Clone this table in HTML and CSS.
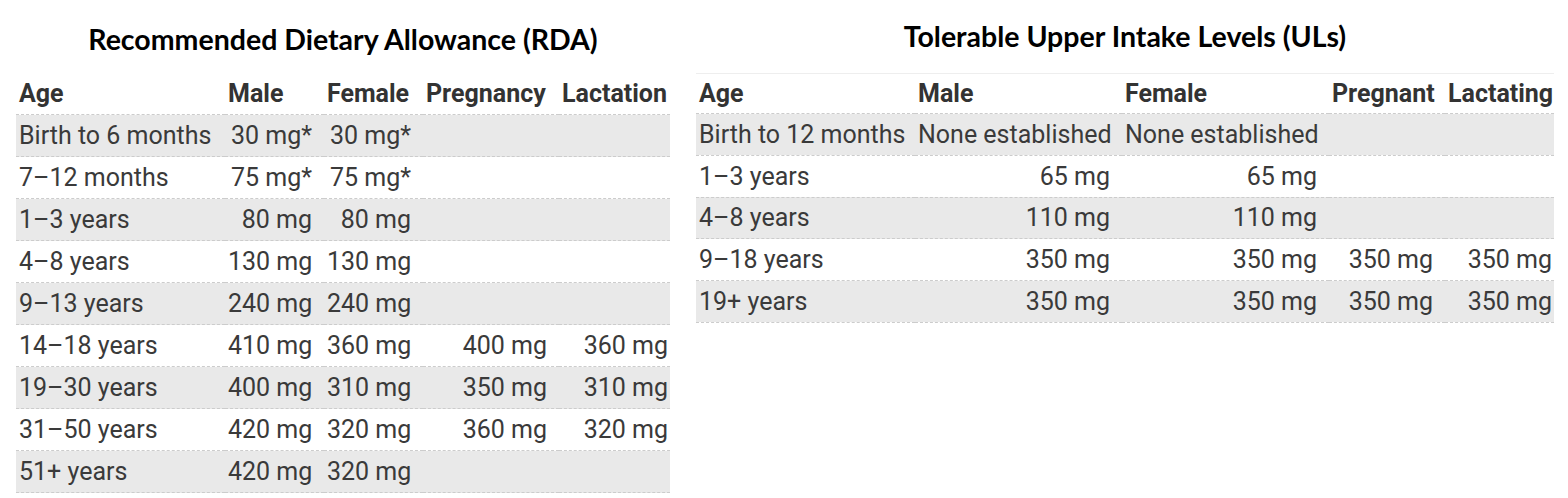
FILE: index.html
```html
<!DOCTYPE html>
<html>
<head>
<meta charset="utf-8">
<link rel="stylesheet" href="styles.css">
</head>
<body>
<div class="page">
  <section class="panel panel-rda">
    <h2 class="title title-rda">Recommended Dietary Allowance (RDA)</h2>
    <table class="grid grid-rda">
      <colgroup>
        <col class="c-age-l"><col class="c-m-l"><col class="c-f-l"><col class="c-p-l"><col class="c-lac-l">
      </colgroup>
      <thead>
        <tr><th>Age</th><th>Male</th><th>Female</th><th>Pregnancy</th><th>Lactation</th></tr>
      </thead>
      <tbody>
        <tr class="shade"><td>Birth to 6 months</td><td class="num">30 mg*</td><td class="num">30 mg*</td><td></td><td></td></tr>
        <tr><td>7–12 months</td><td class="num">75 mg*</td><td class="num">75 mg*</td><td></td><td></td></tr>
        <tr class="shade"><td>1–3 years</td><td class="num">80 mg</td><td class="num">80 mg</td><td></td><td></td></tr>
        <tr><td>4–8 years</td><td class="num">130 mg</td><td class="num">130 mg</td><td></td><td></td></tr>
        <tr class="shade"><td>9–13 years</td><td class="num">240 mg</td><td class="num">240 mg</td><td></td><td></td></tr>
        <tr><td>14–18 years</td><td class="num">410 mg</td><td class="num">360 mg</td><td class="num">400 mg</td><td class="num">360 mg</td></tr>
        <tr class="shade"><td>19–30 years</td><td class="num">400 mg</td><td class="num">310 mg</td><td class="num">350 mg</td><td class="num">310 mg</td></tr>
        <tr><td>31–50 years</td><td class="num">420 mg</td><td class="num">320 mg</td><td class="num">360 mg</td><td class="num">320 mg</td></tr>
        <tr class="shade"><td>51+ years</td><td class="num">420 mg</td><td class="num">320 mg</td><td></td><td></td></tr>
      </tbody>
    </table>
  </section>
  <section class="panel panel-ul">
    <h2 class="title title-ul">Tolerable Upper Intake Levels (ULs)</h2>
    <table class="grid grid-ul">
      <colgroup>
        <col class="c-age-r"><col class="c-m-r"><col class="c-f-r"><col class="c-p-r"><col class="c-lac-r">
      </colgroup>
      <thead>
        <tr><th>Age</th><th>Male</th><th>Female</th><th>Pregnant</th><th>Lactating</th></tr>
      </thead>
      <tbody>
        <tr class="shade"><td>Birth to 12 months</td><td>None established</td><td>None established</td><td></td><td></td></tr>
        <tr><td>1–3 years</td><td class="num">65 mg</td><td class="num">65 mg</td><td></td><td></td></tr>
        <tr class="shade"><td>4–8 years</td><td class="num">110 mg</td><td class="num">110 mg</td><td></td><td></td></tr>
        <tr><td>9–18 years</td><td class="num">350 mg</td><td class="num">350 mg</td><td class="num">350 mg</td><td class="num">350 mg</td></tr>
        <tr class="shade"><td>19+ years</td><td class="num">350 mg</td><td class="num">350 mg</td><td class="num">350 mg</td><td class="num">350 mg</td></tr>
      </tbody>
    </table>
  </section>
</div>
</body>
</html>
```

FILE: styles.css
```css
html, body {
  margin: 0;
  padding: 0;
  background: #ffffff;
}

.page {
  display: flex;
  align-items: flex-start;
  gap: 26px;
  padding-left: 16px;
}

.panel {
  display: flex;
  flex-direction: column;
}

.panel-rda { width: 654px; }
.panel-ul { width: 858px; }

.title {
  margin: 0;
  height: 73px;
  box-sizing: border-box;
  font-family: "Lato", "Liberation Sans", sans-serif;
  font-weight: 700;
  font-size: 28.5px;
  line-height: 32px;
  color: #000;
  text-align: center;
}

.title-rda { padding-top: 23px; }
.title-ul { padding-top: 20px; }

.grid {
  border-collapse: collapse;
  table-layout: fixed;
  width: 100%;
  font-family: "Roboto", "Liberation Sans", sans-serif;
  font-size: 25px;
  color: #3a3a3a;
}

.grid-ul {
  border-top: 1px solid #eeeeee;
}

.grid th {
  font-weight: 700;
  text-align: left;
  color: #333333;
  height: 41px;
  padding: 0 12px 0 3px;
  border-bottom: 1px dashed #cccccc;
  white-space: nowrap;
}

.grid-ul th { height: 39px; }

.grid td {
  height: 41px;
  padding: 0 12px 0 3px;
  border-bottom: 1px dashed #cccccc;
  white-space: nowrap;
}

.grid-ul td { height: 40.8px; }

.grid th:last-child,
.grid td:last-child {
  padding-right: 2px;
}

.grid td.num { text-align: right; }

.grid tr.shade td { background: #e9e9e9; }

.c-age-l { width: 209px; }
.c-m-l { width: 99px; }
.c-f-l { width: 99px; }
.c-p-l { width: 136px; }
.c-lac-l { width: 111px; }

.c-age-r { width: 219px; }
.c-m-r { width: 207px; }
.c-f-r { width: 207px; }
.c-p-r { width: 116px; }
.c-lac-r { width: 109px; }
```
